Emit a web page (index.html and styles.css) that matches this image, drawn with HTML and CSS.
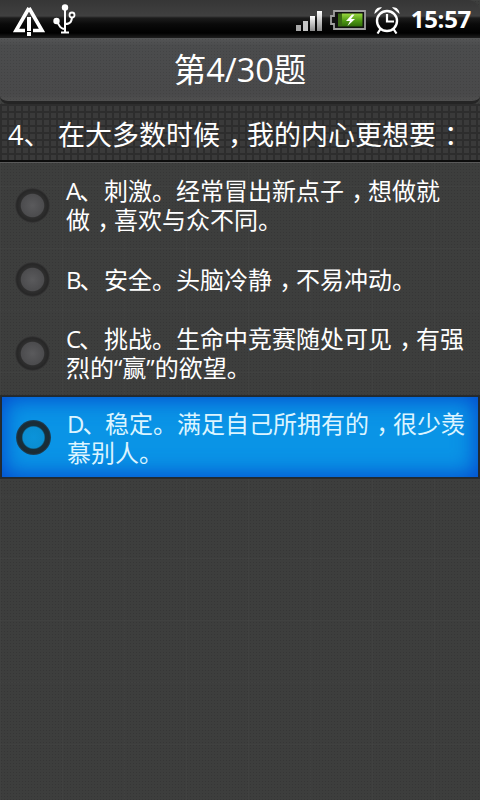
FILE: index.html
```html
<!DOCTYPE html>
<html lang="zh-CN">
<head>
<meta charset="utf-8">
<title>第4/30题</title>
<link rel="stylesheet" href="styles.css">
</head>
<body>
<div class="screen">
  <header class="status">
    <div class="status-left">
      <svg class="ic-warn" width="34" height="32" viewBox="0 0 34 32"><path d="M17 4 4 26.500H13M17 4 30 26.500H21" fill="none" stroke="#fff" stroke-width="3.600"/><rect x="15" y="13" width="4" height="14" fill="#fff"/><rect x="15" y="28" width="4" height="4" fill="#fff"/></svg>
      <svg class="ic-usb" width="24" height="30" viewBox="0 0 24 30"><circle cx="12" cy="3.500" r="3.200" fill="#fff"/><path d="M12 4V28M8 28.500H16M12 25C6 25 7 21 4 18M12 20C18 20 19 17 19 12" fill="none" stroke="#fff" stroke-width="2"/><circle cx="3.500" cy="17" r="3.200" fill="#fff"/><circle cx="19" cy="11" r="2.500" fill="#222" stroke="#fff" stroke-width="1.800"/></svg>
    </div>
    <div class="status-right">
      <svg class="ic-sig" width="27" height="20" viewBox="0 0 27 20"><defs><linearGradient id="sg" x1="0" y1="0" x2="0" y2="1"><stop offset="0" stop-color="#fff"/><stop offset="1" stop-color="#8a8a8a"/></linearGradient></defs><rect x="0" y="14" width="5" height="6" fill="#a8a8a8"/><rect x="7" y="10" width="5" height="10" fill="#c4c4c4"/><rect x="14" y="5" width="5" height="15" fill="url(#sg)"/><rect x="21" y="0" width="5" height="20" fill="url(#sg)"/></svg>
      <svg class="ic-bat" width="36" height="20" viewBox="0 0 36 20"><defs><linearGradient id="bg" x1="0" y1="0" x2="0" y2="1"><stop offset="0" stop-color="#9ad840"/><stop offset=".55" stop-color="#4f9a14"/><stop offset="1" stop-color="#2f6a08"/></linearGradient></defs><path d="M1 6H4V1H35V19H4V14H1Z" fill="#111" stroke="#a0a0a0" stroke-width="1.800"/><rect x="8" y="3.500" width="4" height="13" fill="#3a6a14"/><rect x="12" y="3.500" width="20.500" height="13" fill="url(#bg)"/><path d="M22 4.500 16 11H20L17.500 16 25 9H21L24.500 4.500Z" fill="#fff"/></svg>
      <svg class="ic-alarm" width="26" height="28" viewBox="0 0 26 28"><circle cx="13" cy="15" r="10" fill="none" stroke="#fff" stroke-width="2.400"/><path d="M13 8V15.500H20" fill="none" stroke="#fff" stroke-width="2.200"/><path d="M0.500 8C0.500 3.500 4 0.500 8 1.500ZM25.500 8C25.500 3.500 22 0.500 18 1.500Z" fill="#fff"/><path d="M6.500 23 3.500 27.500M19.500 23 22.500 27.500" stroke="#fff" stroke-width="2.200"/></svg>
      <span class="time">15:57</span>
    </div>
  </header>

  <div class="title-bar"><h1 class="title">第4/30题</h1></div>

  <div class="question">
    <span class="q-num">4、</span><span class="q-text">在大多数时候<span class="cm">，</span>我的内心更想要<span class="cm">：</span></span>
  </div>

  <ul class="options">
    <li class="option two">
      <span class="radio"></span>
      <span class="opt-text"><span class="lbl">A、</span>刺激。经常冒出新点子<span class="cm">，</span>想做就<br>做<span class="cm">，</span>喜欢与众不同。</span>
    </li>
    <li class="option one">
      <span class="radio"></span>
      <span class="opt-text"><span class="lbl">B、</span>安全。头脑冷静<span class="cm">，</span>不易冲动。</span>
    </li>
    <li class="option two">
      <span class="radio"></span>
      <span class="opt-text"><span class="lbl">C、</span>挑战。生命中竞赛随处可见<span class="cm">，</span>有强<br>烈的“赢”的欲望。</span>
    </li>
    <li class="option two selected">
      <span class="radio"></span>
      <span class="opt-text"><span class="lbl">D、</span>稳定。满足自己所拥有的<span class="cm">，</span>很少羡<br>慕别人。</span>
    </li>
  </ul>
</div>
</body>
</html>
```
FILE: styles.css
```css
* { box-sizing: border-box; }
html, body { margin: 0; padding: 0; background: #000; }
body { font-family: "Open Sans", "Noto Sans CJK SC", sans-serif; color: #fff; }
.screen {
  width: 480px; height: 800px; overflow: hidden;
  display: flex; flex-direction: column;
  background-color: #3d3e3d;
  background-image:
    linear-gradient(rgba(255,255,255,.015) 1px, transparent 1px),
    linear-gradient(90deg, rgba(255,255,255,.015) 1px, transparent 1px),
    radial-gradient(rgba(0,0,0,.12) .7px, transparent .8px);
  background-size: 62px 62px, 62px 62px, 3px 3px;
}
.status {
  height: 38px; flex: none;
  display: flex; justify-content: space-between; align-items: center;
  background: linear-gradient(#363636 0, #404040 16px, #1c1c1c 18px, #0a0a0a 24px, #000 33px, #1e1e1e 38px);
  border-radius: 0 12px 0 0;
}
.status-left { display: flex; align-items: center; gap: 7px; padding-left: 12px; }
.status-right { display: flex; align-items: center; padding-right: 9px; }
.ic-warn { margin-top: 2px; }
.ic-sig { margin-right: 7px; margin-top: 4px; }
.ic-bat { margin-right: 8px; margin-top: 1px; }
.ic-alarm { margin-right: 11px; margin-top: 1px; }
.time { font: 700 24px/1 "Open Sans", sans-serif; letter-spacing: -.3px; }
.title-bar {
  height: 66px; flex: none; padding-top: 2px;
  display: flex; align-items: center; justify-content: center;
  background-color: #484949;
  background-image:
    radial-gradient(rgba(0,0,0,.1) .7px, transparent .8px),
    linear-gradient(#555657, #4b4c4d 12%, #49494a 90%, #505050);
  background-size: 3px 3px, 100% 100%;
  border-radius: 0 0 8px 8px;
  border-bottom: 3px solid #242424;
}
.title { margin: 0; font-size: 32.500px; font-weight: 400; line-height: 1; }
.question {
  height: 58px; flex: none;
  display: flex; align-items: center; padding: 6px 0 0 8px;
  font-size: 27px; line-height: 32px; white-space: nowrap;
  background-color: #3a3a3a;
  background-image:
    linear-gradient(#2d2d2d 2px, transparent 2px),
    linear-gradient(90deg, #2d2d2d 2px, transparent 2px);
  background-size: 7px 7px;
  border-bottom: 2px solid #0c0c0c;
  box-shadow: 0 1px 0 #5a5a5a;
}
.q-num { width: 50px; flex: none; }
.cm { padding-left: .3em; letter-spacing: -.3em; }
.lbl { display: inline-block; width: 38px; letter-spacing: -2px; }
.options { list-style: none; margin: 2px 0 0; padding: 0; display: flex; flex-direction: column; }
.option {
  display: flex; align-items: center; gap: 16px; padding: 0 0 0 15px;
  font-size: 24px; line-height: 29px;
}
.two { height: 82px; }
.one { height: 66px; }
.radio {
  flex: none; width: 35px; height: 35px; border-radius: 50%;
  background: radial-gradient(closest-side, #5a5a5c 0, #4c4c4e 64%, #2e2e2e 70%, #272727 90%, #3a3a3a 100%);
}
.opt-text { flex: 1; min-width: 0; color: #fff; white-space: nowrap; }
.selected {
  margin: 2px 1px 0; padding: 1px 0 0 14px; height: 82px;
  background-color: #0a94e6;
  border: 1px solid #1d2a35;
  box-shadow: 0 0 0 1px #2a2b2b, inset 0 0 22px 2px #0448cc;
}
.selected .radio {
  background: radial-gradient(closest-side, #0b93da 0, #0a8ed2 60%, #16303c 68%, #1c2a33 90%, #1a4560 100%);
}
.selected .opt-text { color: #dcf4ff; }
```
